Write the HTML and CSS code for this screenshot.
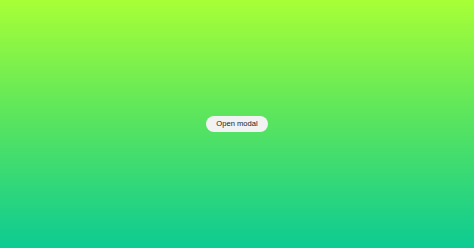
FILE: index.html
```html
<!DOCTYPE html>
<html>
<head>
<meta charset="utf-8">
<link rel="stylesheet" href="styles.css">
</head>
<body>
<main class="stage">
  <button class="open-btn" type="button">Open modal</button>
</main>
</body>
</html>
```
FILE: styles.css
```css
html, body {
  margin: 0;
  padding: 0;
  height: 100%;
}
.stage {
  height: 100vh;
  display: flex;
  align-items: center;
  justify-content: center;
  background: linear-gradient(180deg, #a8ff36 0%, #5ee65c 45%, #0ccb93 100%);
}
.open-btn {
  font-family: "Liberation Sans", Arial, sans-serif;
  font-size: 7.6px;
  color: #1a1a1a;
  background: #f2f2f2;
  border: none;
  border-radius: 8px;
  height: 16px;
  padding: 0 10.5px;
  line-height: 16px;
}
```
